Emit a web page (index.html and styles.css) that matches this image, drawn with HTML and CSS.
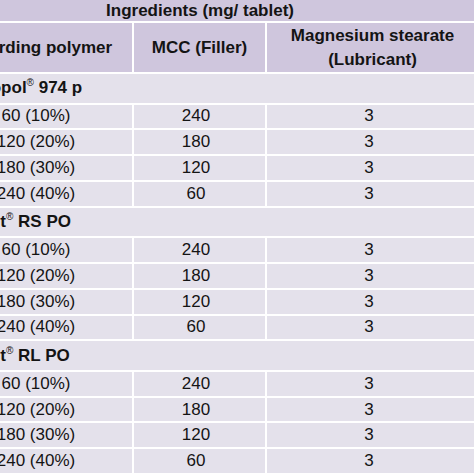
FILE: index.html
```html
<!DOCTYPE html>
<html>
<head>
<meta charset="utf-8">
<link rel="stylesheet" href="styles.css">
</head>
<body>
<div class="frame">
<table class="formula">
  <colgroup>
    <col class="c-polymer">
    <col class="c-mcc">
    <col class="c-mg">
  </colgroup>
  <thead>
    <tr class="head-top">
      <th colspan="3" class="ingredients">Ingredients (mg/ tablet)</th>
    </tr>
    <tr class="head-cols">
      <th class="polymer-head">Retarding polymer</th>
      <th>MCC (Filler)</th>
      <th>Magnesium stearate<br>(Lubricant)</th>
    </tr>
  </thead>
  <tbody>
    <tr class="group"><td colspan="3"><span class="label label-carbopol">Carbopol<sup>®</sup> 974 p</span></td></tr>
    <tr class="row"><td class="polymer">60 (10%)</td><td>240</td><td>3</td></tr>
    <tr class="row"><td class="polymer">120 (20%)</td><td>180</td><td>3</td></tr>
    <tr class="row"><td class="polymer">180 (30%)</td><td>120</td><td>3</td></tr>
    <tr class="row"><td class="polymer">240 (40%)</td><td>60</td><td>3</td></tr>
    <tr class="group"><td colspan="3"><span class="label">Eudragit<sup>®</sup> RS PO</span></td></tr>
    <tr class="row"><td class="polymer">60 (10%)</td><td>240</td><td>3</td></tr>
    <tr class="row"><td class="polymer">120 (20%)</td><td>180</td><td>3</td></tr>
    <tr class="row"><td class="polymer">180 (30%)</td><td>120</td><td>3</td></tr>
    <tr class="row"><td class="polymer">240 (40%)</td><td>60</td><td>3</td></tr>
    <tr class="group"><td colspan="3"><span class="label">Eudragit<sup>®</sup> RL PO</span></td></tr>
    <tr class="row"><td class="polymer">60 (10%)</td><td>240</td><td>3</td></tr>
    <tr class="row"><td class="polymer">120 (20%)</td><td>180</td><td>3</td></tr>
    <tr class="row"><td class="polymer">180 (30%)</td><td>120</td><td>3</td></tr>
    <tr class="row"><td class="polymer">240 (40%)</td><td>60</td><td>3</td></tr>
  </tbody>
</table>
</div>
</body>
</html>
```

FILE: styles.css
```css
html, body {
  margin: 0;
  padding: 0;
  background: #ffffff;
  overflow: hidden;
}
.frame {
  width: 474px;
  height: 474px;
  overflow: hidden;
}
.formula {
  margin-left: -80px;
  margin-top: -2px;
  border-collapse: separate;
  border-spacing: 2px;
  table-layout: fixed;
  width: 560px;
  font-family: "Liberation Sans", Arial, sans-serif;
  font-size: 17px;
  color: #141414;
  background: #ffffff;
}
.c-polymer { width: 210px; }
.c-mcc { width: 131px; }
.c-mg { width: 211px; }

.formula th,
.formula td {
  padding: 0;
  text-align: center;
  vertical-align: middle;
}
.formula th {
  background: #cfc6dd;
  font-weight: bold;
  color: #141414;
}
.head-top th {
  height: 21px;
  line-height: 21px;
}
.ingredients {
  padding-left: 255px;
}
.head-cols th {
  height: 49px;
  line-height: 24px;
}
.head-cols .polymer-head {
  padding-left: 20px;
}
.formula td {
  background: #e4e1eb;
}
.row .polymer {
  padding-left: 18px;
}
.row td {
  height: 23.8px;
  line-height: 20px;
}
.row td + td {
  padding-right: 7px;
}
.group td {
  height: 28.5px;
  text-align: left;
  font-weight: bold;
  padding-left: 15px;
}
.label-carbopol {
  padding-left: 15px;
}
.label sup {
  font-size: 10px;
  font-weight: normal;
  vertical-align: 7px;
  line-height: 0;
}
```
